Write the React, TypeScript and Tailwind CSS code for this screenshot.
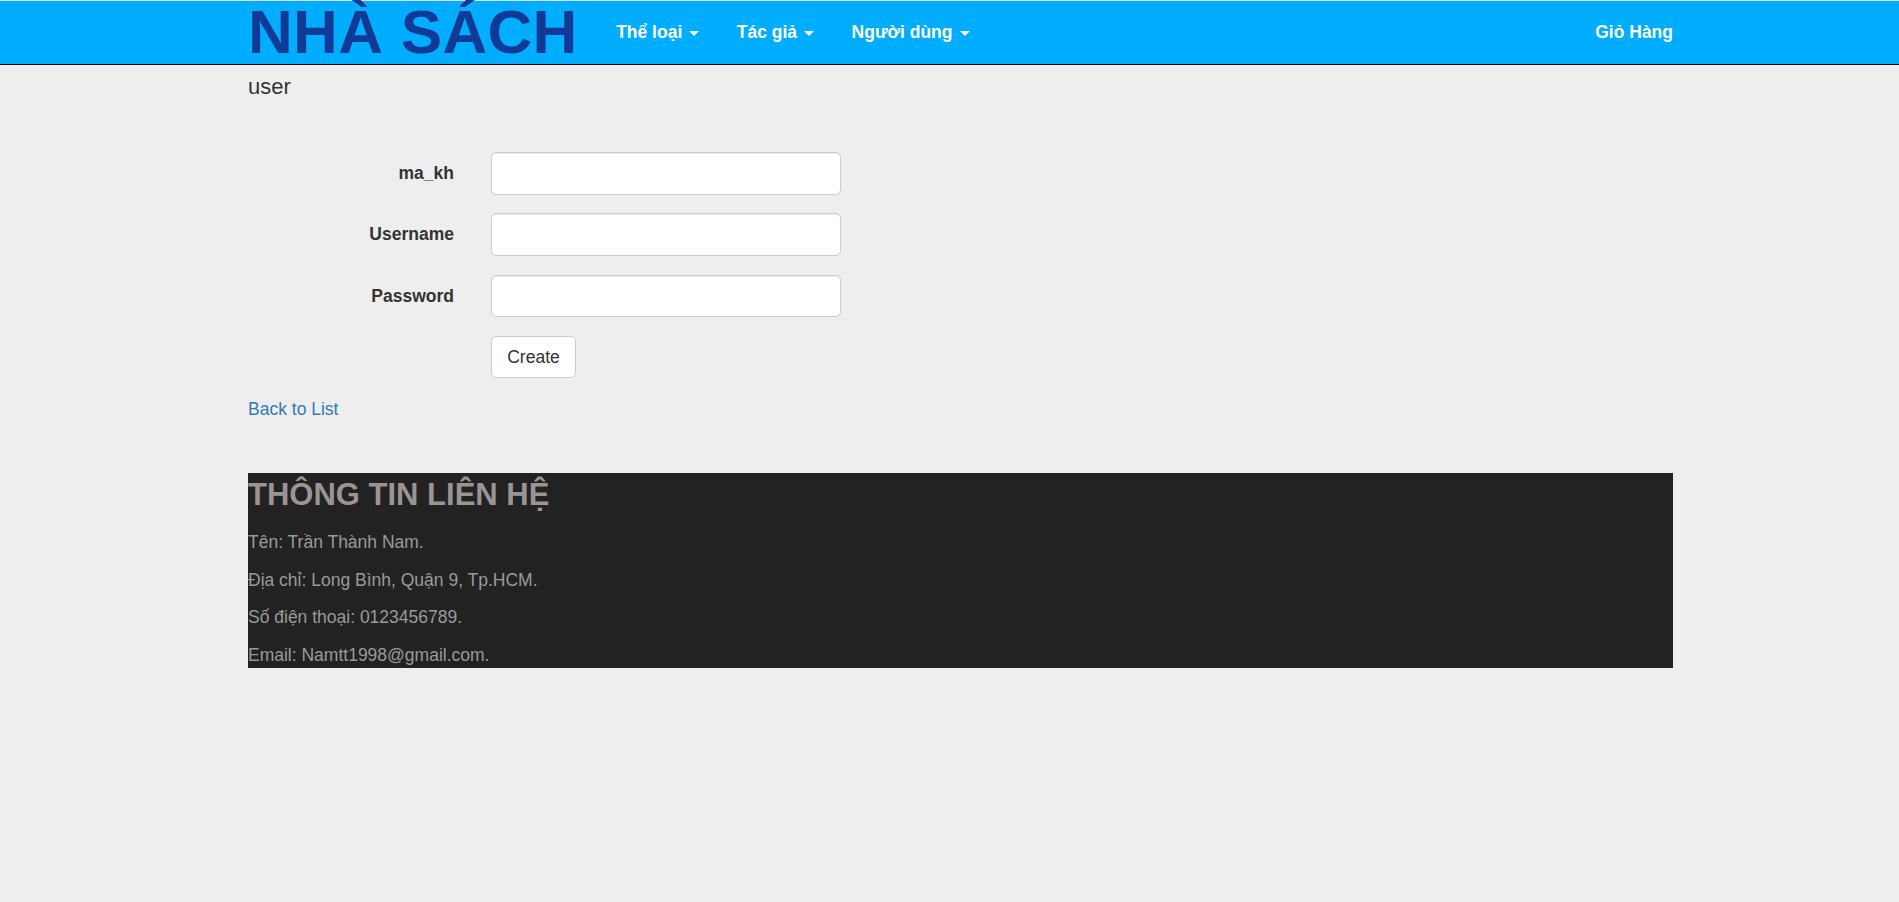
const font = '[font-family:"Liberation_Sans",Arial,sans-serif]';

function Caret() {
  return <span className="inline-block ml-[7px] align-middle border-x-[5px] border-t-[5px] border-x-transparent border-t-white" />;
}

function NavLink({ label, caret = true }: { label: string; caret?: boolean }) {
  return (
    <a className="block text-white font-bold text-[17.5px] whitespace-nowrap">
      {label}
      {caret && <Caret />}
    </a>
  );
}

function Field({ label }: { label: string }) {
  return (
    <div className="flex items-center h-[42.5px] mb-[18.8px]">
      <label className="w-[206px] text-right font-bold text-[17.5px] text-[#333]">{label}</label>
      <input
        type="text"
        className="ml-[37px] w-[350px] h-[42.5px] bg-white border border-[#ccc] rounded-[5px] shadow-[inset_0_1px_1px_rgba(0,0,0,0.075)]"
      />
    </div>
  );
}

export default function App() {
  return (
    <div className={`min-h-screen bg-[#eeeeee] text-[17.5px] text-[#333] ${font}`}>
      <nav className="h-[65px] border-t border-t-[#dddddd] border-b border-b-black bg-[#00adff]">
        <div className="ml-[248px] w-[1425px] h-full flex items-center">
          <a className="text-[62px] leading-[62px] tracking-[0.3px] font-bold text-[#0f3a96] whitespace-nowrap -mt-[2px]">NHÀ SÁCH</a>
          <div className="ml-[38.5px] flex items-center gap-[37.5px]">
            <NavLink label="Thể loại" />
            <NavLink label="Tác giả" />
            <NavLink label="Người dùng" />
          </div>
          <div className="ml-auto">
            <NavLink label="Giỏ Hàng" caret={false} />
          </div>
        </div>
      </nav>

      <main className="ml-[248px] w-[1425px]">
        <h2 className="text-[22px] leading-[24px] mt-[10px] mb-[53px]">user</h2>
        <form>
          <Field label="ma_kh" />
          <Field label="Username" />
          <Field label="Password" />
          <div className="ml-[243px]">
            <button type="button" className="w-[85px] h-[42px] bg-white border border-[#ccc] rounded-[5px] text-[17.5px] text-[#333]">
              Create
            </button>
          </div>
        </form>
        <a className="block mt-[19px] leading-[24px] text-[#337ab7]">Back to List</a>

        <footer className="mt-[52px] h-[195px] bg-[#222222] text-[#9a9a9a]">
          <h3 className="text-[31px] leading-[36px] font-bold text-[#9c9494] pt-[4.6px] h-[40.6px]">THÔNG TIN LIÊN HỆ</h3>
          <p className="mt-[16.8px] leading-[24px]">Tên: Trần Thành Nam.</p>
          <p className="mt-[13.5px] leading-[24px]">Địa chỉ: Long Bình, Quận 9, Tp.HCM.</p>
          <p className="mt-[13.5px] leading-[24px]">Số điện thoại: 0123456789.</p>
          <p className="mt-[13.5px] leading-[24px]">Email: Namtt1998@gmail.com.</p>
        </footer>
      </main>
    </div>
  );
}
